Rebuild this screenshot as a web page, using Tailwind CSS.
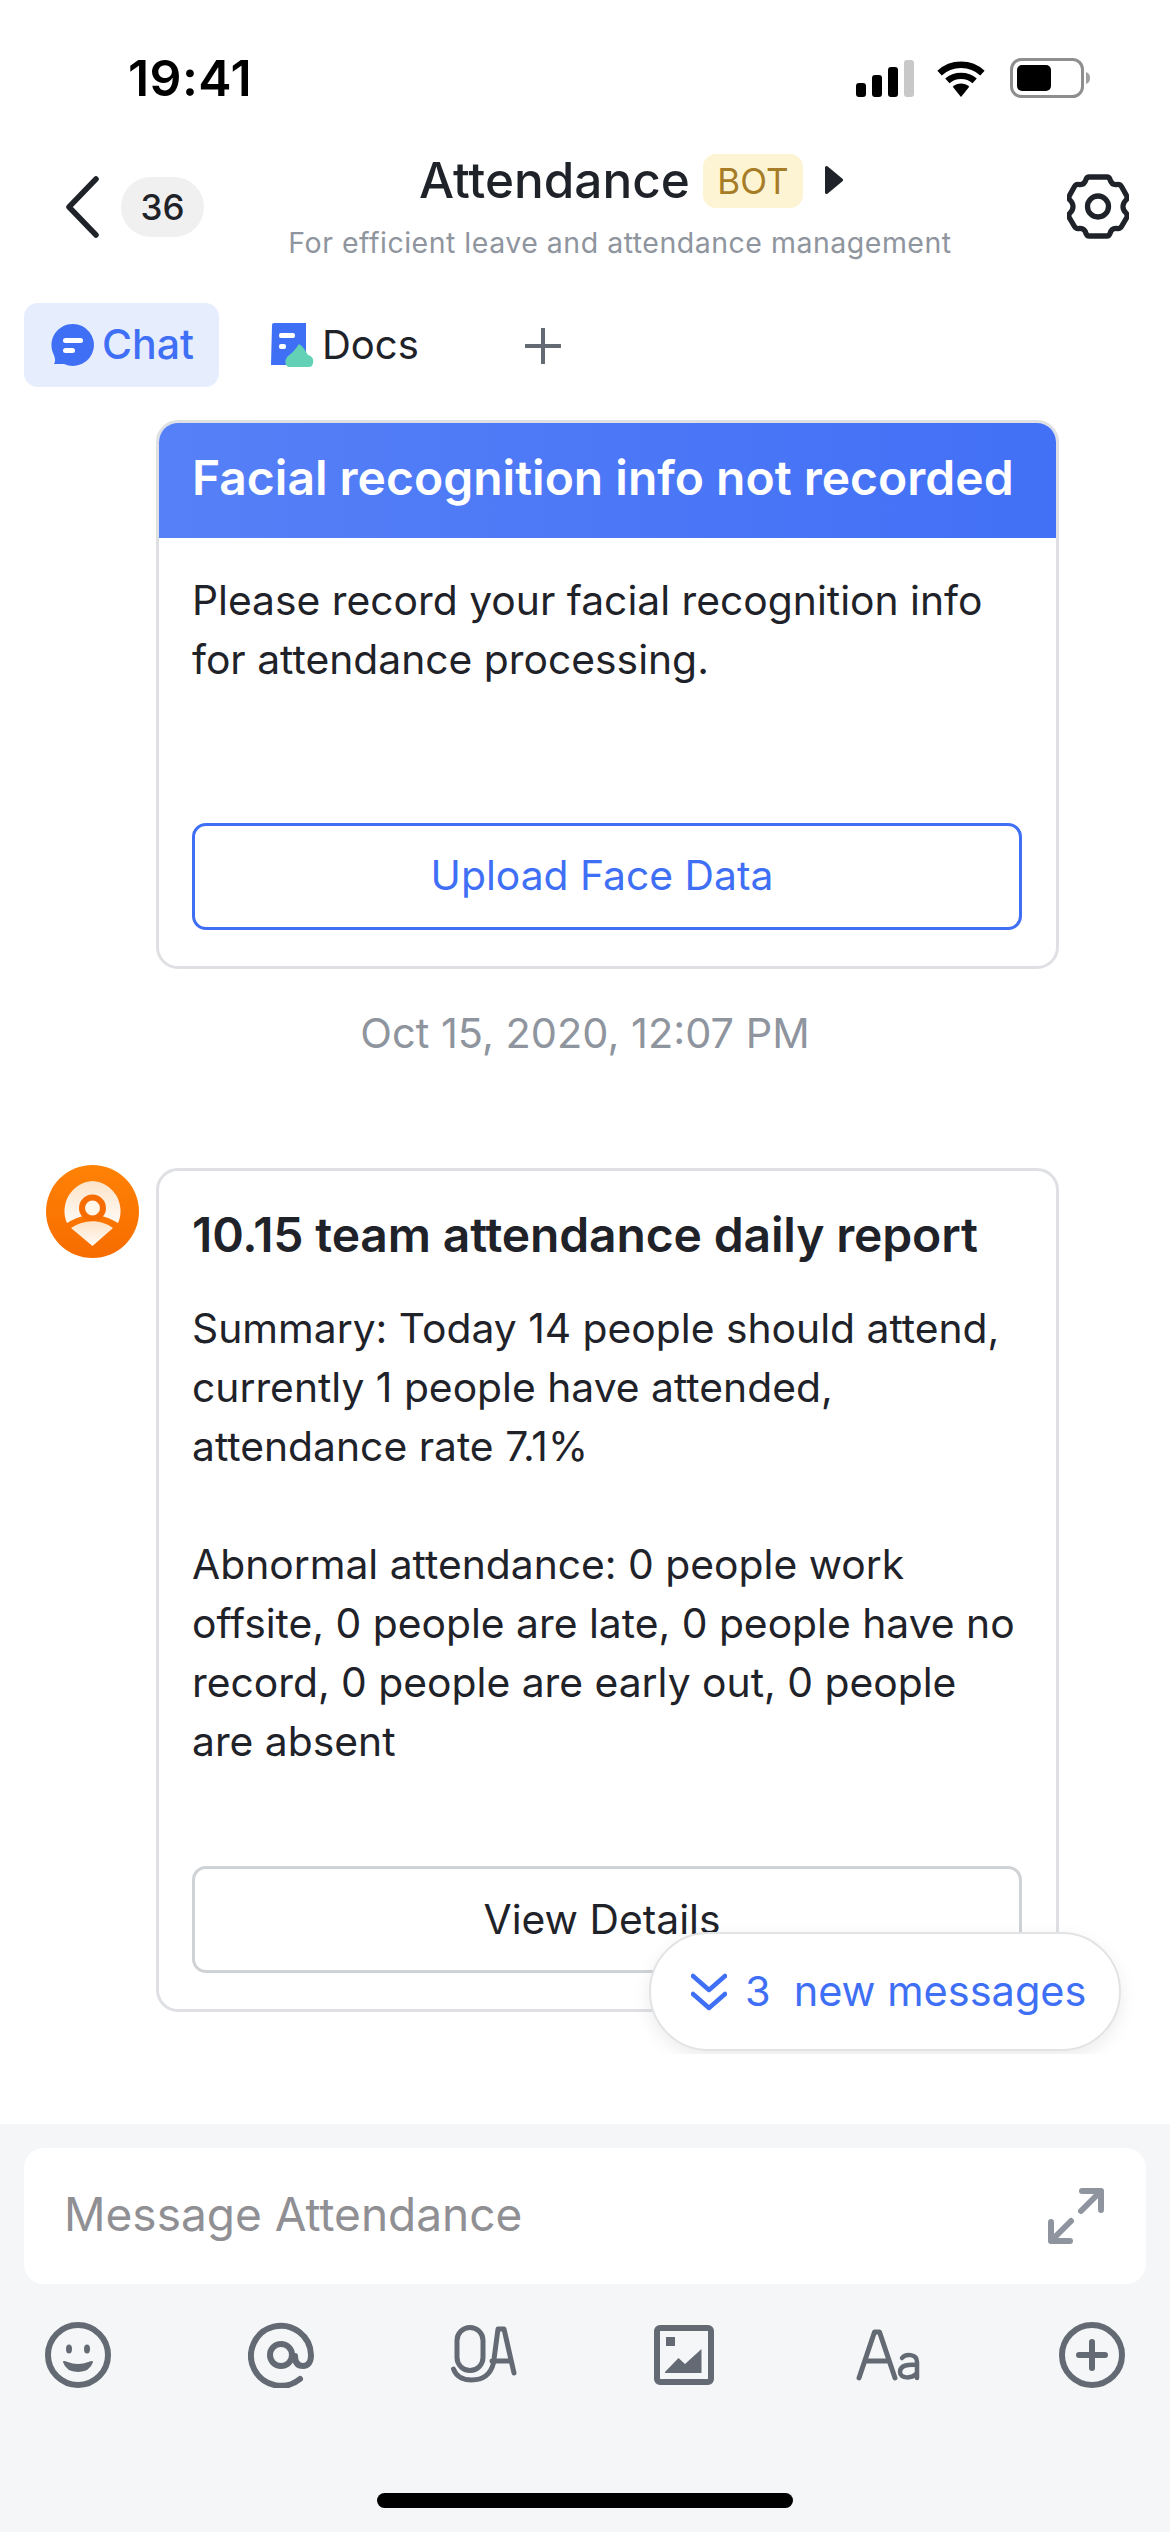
<!doctype html>
<html><head><meta charset="utf-8"><script src="https://cdn.jsdelivr.net/npm/@tailwindcss/browser@4"></script></head>
<body class="m-0">
<div class="w-[1170px] h-[2532px] bg-white flex flex-col overflow-hidden font-['Inter',sans-serif] text-[#1f2329] relative">
  <!-- status bar -->
  <div class="h-[156px] shrink-0 flex items-center justify-between pl-[128px] pr-[79px]">
    <span class="text-[50px] font-semibold leading-none tracking-[0.4px] text-black">19:41</span>
    <div class="flex items-center">
      <svg width="58" height="37" viewBox="0 0 58 37"><rect x="0" y="23" width="10" height="14" rx="3" fill="#000"/><rect x="16" y="15" width="10" height="22" rx="3" fill="#000"/><rect x="32" y="7" width="10" height="30" rx="3" fill="#000"/><rect x="48" y="0" width="10" height="37" rx="3" fill="#c8c8c8"/></svg>
      <svg class="ml-[22px]" width="50" height="37" viewBox="0 0 50 38"><path d="M3 13.500C15 2 35 2 47 13.500" fill="none" stroke="#000" stroke-width="6.500"/><path d="M11 21.500C18.500 14.500 31.500 14.500 39 21.500" fill="none" stroke="#000" stroke-width="6.500"/><path d="M16.500 27.500C21.500 23 28.500 23 33.500 27.500L25 38Z" fill="#000"/></svg>
      <svg class="ml-[24px]" width="81" height="40" viewBox="0 0 81 40"><rect x="1.500" y="1.500" width="71" height="37" rx="10" fill="none" stroke="#8e8e8e" stroke-width="3"/><rect x="7" y="7" width="34" height="26" rx="5" fill="#000"/><path d="M76 14c3 1 4 3 4 6s-1 5-4 6z" fill="#a0a0a0"/></svg>
    </div>
  </div>
  <!-- header -->
  <div class="h-[140px] shrink-0 relative">
    <svg class="absolute left-[64px] top-[20px]" width="36" height="62" viewBox="0 0 36 62"><path d="M32 3L5 31L32 59" fill="none" stroke="#1f2329" stroke-width="5.500" stroke-linecap="round" stroke-linejoin="round"/></svg>
    <div class="absolute left-[121px] top-[21px] w-[83px] h-[60px] rounded-full bg-[#f0f0f0] flex items-center justify-center text-[35px] font-medium">36</div>
    <div class="flex flex-col items-center pl-[70px]">
      <div class="flex items-center h-[58px] mt-[-4px] ml-[22px]">
        <span class="text-[49.500px] leading-none font-medium">Attendance</span>
        <span class="ml-[13px] w-[100px] h-[54px] rounded-[13px] bg-[#fdf4d3] text-[#a67c27] text-[35px] flex items-center justify-center">BOT</span>
        <svg class="ml-[22px] mt-[-2px]" width="18" height="28" viewBox="0 0 18 28"><path d="M1.500 1.500L16.500 14L1.500 26.500Z" fill="#1f2329" stroke="#1f2329" stroke-width="3" stroke-linejoin="round"/></svg>
      </div>
      <div class="text-[28.500px] leading-none text-[#8f959e] mt-[19px] tracking-[0.5px]">For efficient leave and attendance management</div>
    </div>
    <svg class="absolute left-[1067px] top-[18px]" width="62" height="65" viewBox="0 0 62 65"><path d="M22 3H40Q42 3 43 5.500C44 9 46 11 50 10.500Q53 10 54.500 12.500L59.500 21.500Q61 24 59 26C55 30 55 35 59 39Q61 41 59.500 44L54.500 52.500Q53 55 50 54.500C46 54 44 56 43 59.500Q42 62 40 62H22Q20 62 19 59.500C18 56 16 54 12 54.500Q9 55 7.500 52.500L2.500 44Q1 41 3 39C7 35 7 30 3 26Q1 24 2.500 21.500L7.500 12.500Q9 10 12 10.500C16 11 18 9 19 5.500Q20 3 22 3Z" fill="none" stroke="#1f2329" stroke-width="5.300" stroke-linejoin="round"/><circle cx="31" cy="32.500" r="10.500" fill="none" stroke="#1f2329" stroke-width="5.300"/></svg>
  </div>
  <!-- tabs -->
  <div class="h-[124px] shrink-0 flex items-start pl-[24px] relative">
    <div class="w-[195px] h-[84px] mt-[7px] rounded-[14px] bg-[#e6edfd] flex items-center pl-[27px] gap-[7px]">
      <svg width="44" height="44" viewBox="0 0 44 44"><path d="M22 1a21 21 0 1 1-9 40H3c2-3 1-6-.500-10A21 21 0 0 1 22 1Z" fill="#3f6ff5"/><rect x="12" y="15" width="20" height="5" rx="2.500" fill="#fff"/><rect x="12" y="25" width="12" height="5" rx="2.500" fill="#fff"/></svg>
      <span class="text-[41px] text-[#3f6ff5] font-medium">Chat</span>
    </div>
    <div class="flex items-center ml-[51px] mt-[7px] h-[84px] gap-[8px]">
      <svg width="44" height="44" viewBox="0 0 44 44"><path d="M2 2a2 2 0 0 1 2-2h32v42H1Z" fill="#3f6ff5"/><rect x="9" y="10" width="16" height="5" rx="2" fill="#fff"/><rect x="9" y="21" width="7" height="5" rx="2" fill="#fff"/><path d="M29 21c5 3 7 8 9 11 4 1 6 4 5 8-.5 3-2 4-4 4H18c-3-2-4-7 0-11 4-3 7-6 11-12Z" fill="#62d1b6"/></svg>
      <span class="text-[40px]">Docs</span>
    </div>
    <svg class="ml-[106px] mt-[32px]" width="36" height="36" viewBox="0 0 36 36"><path d="M18 1V35M1 18H35" stroke="#646a73" stroke-width="4" stroke-linecap="round"/></svg>
  </div>
  <!-- messages -->
  <div class="flex-1 flex flex-col min-h-0 relative">
    <div class="ml-[156px] w-[903px] h-[549px] shrink-0 rounded-[22px] border-[3px] border-[#dee0e3] overflow-hidden flex flex-col">
      <div class="h-[115px] pb-[5px] bg-gradient-to-r from-[#5680f7] to-[#4270f6] pl-[33px] flex items-center text-[48px] font-semibold text-white shrink-0 whitespace-nowrap">Facial recognition info not recorded</div>
      <div class="px-[33px] pt-[33px] text-[40.800px] leading-[59px] h-[286px] shrink-0 whitespace-nowrap">Please record your facial recognition info<br>for attendance processing.</div>
      <div class="ml-[33px] mr-[34px] mt-[-1px] h-[107px] pb-[2px] pr-[10px] rounded-[14px] border-[3px] border-[#3f6ff5] text-[#3f6ff5] text-[40.800px] flex items-center justify-center">Upload Face Data</div>
    </div>
    <div class="text-center text-[41.500px] leading-[48px] text-[#8f959e] mt-[40px]">Oct 15, 2020, 12:07 PM</div>
    <div class="flex items-start mt-[111px] pl-[46px] shrink-0">
      <svg width="93" height="93" viewBox="0 0 93 93" class="mt-[-3px]"><defs><linearGradient id="o" x1="0" y1="0" x2="0" y2="1"><stop offset="0" stop-color="#ff8205"/><stop offset="1" stop-color="#f76c00"/></linearGradient><linearGradient id="p" x1="0" y1="0" x2="0" y2="1"><stop offset="0" stop-color="#fde3c8"/><stop offset="1" stop-color="#fffaf5"/></linearGradient></defs><circle cx="46.500" cy="46.500" r="46.500" fill="url(#o)"/><path d="M46.500 16A30 30 0 0 1 72 58C64 53 56 50 46.500 50S29 53 21 58A30 30 0 0 1 46.500 16Z" fill="url(#p)"/><circle cx="46.500" cy="43" r="10.500" fill="#fff6ec" stroke="#f76c00" stroke-width="6"/><path d="M25 63C38 54 55 54 67 63L46.500 81Z" fill="url(#p)"/></svg>
      <div class="ml-[17px] w-[903px] h-[844px] rounded-[22px] border-[3px] border-[#dee0e3] pl-[33px] pr-[34px] pt-[34px] flex flex-col">
        <div class="text-[48px] leading-[60px] font-semibold whitespace-nowrap tracking-[-0.15px]">10.15 team attendance daily report</div>
        <div class="text-[40.800px] leading-[59px] mt-[34px] h-[567px] shrink-0 whitespace-nowrap">Summary: Today 14 people should attend,<br>currently 1 people have attended,<br>attendance rate 7.1%<br><br>Abnormal attendance: 0 people work<br>offsite, 0 people are late, 0 people have no<br>record, 0 people are early out, 0 people<br>are absent</div>
        <div class="h-[107px] pr-[10px] rounded-[14px] border-[3px] border-[#d0d3d6] text-[40.800px] flex items-center justify-center shrink-0">View Details</div>
      </div>
    </div>
    <!-- new messages pill (shadow clipped at the list's edge) -->
    <div class="absolute left-[620px] top-[1480px] w-[550px] h-[154px] overflow-hidden pt-[32px] pl-[29px]">
      <div class="w-[472px] h-[119px] rounded-full bg-white border-[2px] border-[#e2e3e5] shadow-[0_6px_18px_rgba(0,0,0,0.08)] flex items-center pl-[40px] text-[#3f6ff5] text-[41.500px] whitespace-nowrap">
        <svg width="36" height="38" viewBox="0 0 36 38" fill="none" stroke="#3f6ff5" stroke-width="4.500" stroke-linecap="round" stroke-linejoin="round"><path d="M2 3L18 17L34 3M2 21L18 35L34 21"/></svg>
        <span class="ml-[18px]">3</span>
        <span class="ml-[23px]">new messages</span>
      </div>
    </div>
  </div>
  <!-- bottom -->
  <div class="h-[408px] shrink-0 bg-[#f5f6f8] flex flex-col px-[24px] pt-[24px]">
    <div class="h-[136px] shrink-0 rounded-[20px] bg-white flex items-center justify-between pl-[40px] pr-[42px]">
      <span class="text-[46px] leading-[56px] mt-[-4px] text-[#8f8f94]">Message Attendance</span>
      <svg width="56" height="56" viewBox="0 0 56 56"><path d="M34 3H53V22M51 5L33 23M22 53H3V34M5 51L23 33" fill="none" stroke="#8f959e" stroke-width="6" stroke-linecap="round" stroke-linejoin="round"/></svg>
    </div>
    <div class="flex justify-between items-center mt-[38px] pl-[21px] pr-[21px] h-[66px] shrink-0">
      <svg width="66" height="66" viewBox="0 0 66 66" fill="none" stroke="#646a73" stroke-width="6"><circle cx="33" cy="33" r="30"/><ellipse cx="24" cy="27" rx="3" ry="4.500" fill="#646a73" stroke="none"/><ellipse cx="42" cy="27" rx="3" ry="4.500" fill="#646a73" stroke="none"/><path d="M19 40c3 0 5 3 14 3s11-3 14-3c-2 6-7 9-14 9s-12-3-14-9Z" fill="#646a73" stroke="#646a73" stroke-width="2" stroke-linejoin="round"/></svg>
      <svg width="66" height="66" viewBox="0 0 66 66" fill="none" stroke="#646a73" stroke-width="6" stroke-linecap="round"><path d="M52 57A30 30 0 1 1 63 33c0 7-3 11-8 11s-8-3-8-10"/><circle cx="33" cy="33" r="11"/></svg>
      <svg width="66" height="66" viewBox="0 0 66 66" fill="none" stroke="#646a73" stroke-width="5" stroke-linecap="round" stroke-linejoin="round"><rect x="6" y="5.500" width="26" height="43" rx="13"/><path d="M2.500 47c3 9 12 11 18 11 11 0 19-5 22-17L47 7H53L63 51M41 39H60"/></svg>
      <svg width="66" height="66" viewBox="0 0 66 66" fill="none" stroke="#646a73" stroke-width="6" stroke-linejoin="round"><rect x="4" y="6" width="54" height="54" rx="3"/><rect x="13" y="15" width="9" height="9" fill="#646a73" stroke="none"/><path d="M12 51V50L25.500 36L32 42L48.500 27V51Z" fill="#646a73" stroke="none"/></svg>
      <svg width="66" height="66" viewBox="0 0 66 66" fill="none" stroke="#646a73" stroke-width="5" stroke-linejoin="round" stroke-linecap="round"><path d="M3 56L18.500 10H23.500L39 56M9 39H33"/><path d="M46 36c3-4 15-5 15 4V56M61 43c-8-1-17 0-17 7 0 7 12 7 17 1" stroke-width="4.500"/></svg>
      <svg width="66" height="66" viewBox="0 0 66 66" fill="none" stroke="#646a73" stroke-width="6" stroke-linecap="round"><circle cx="33" cy="33" r="30"/><path d="M33 20V46M20 33H46"/></svg>
    </div>
    <div class="mt-auto mb-[24px] mx-auto w-[416px] h-[15px] rounded-full bg-black"></div>
  </div>
</div>
</body></html>
